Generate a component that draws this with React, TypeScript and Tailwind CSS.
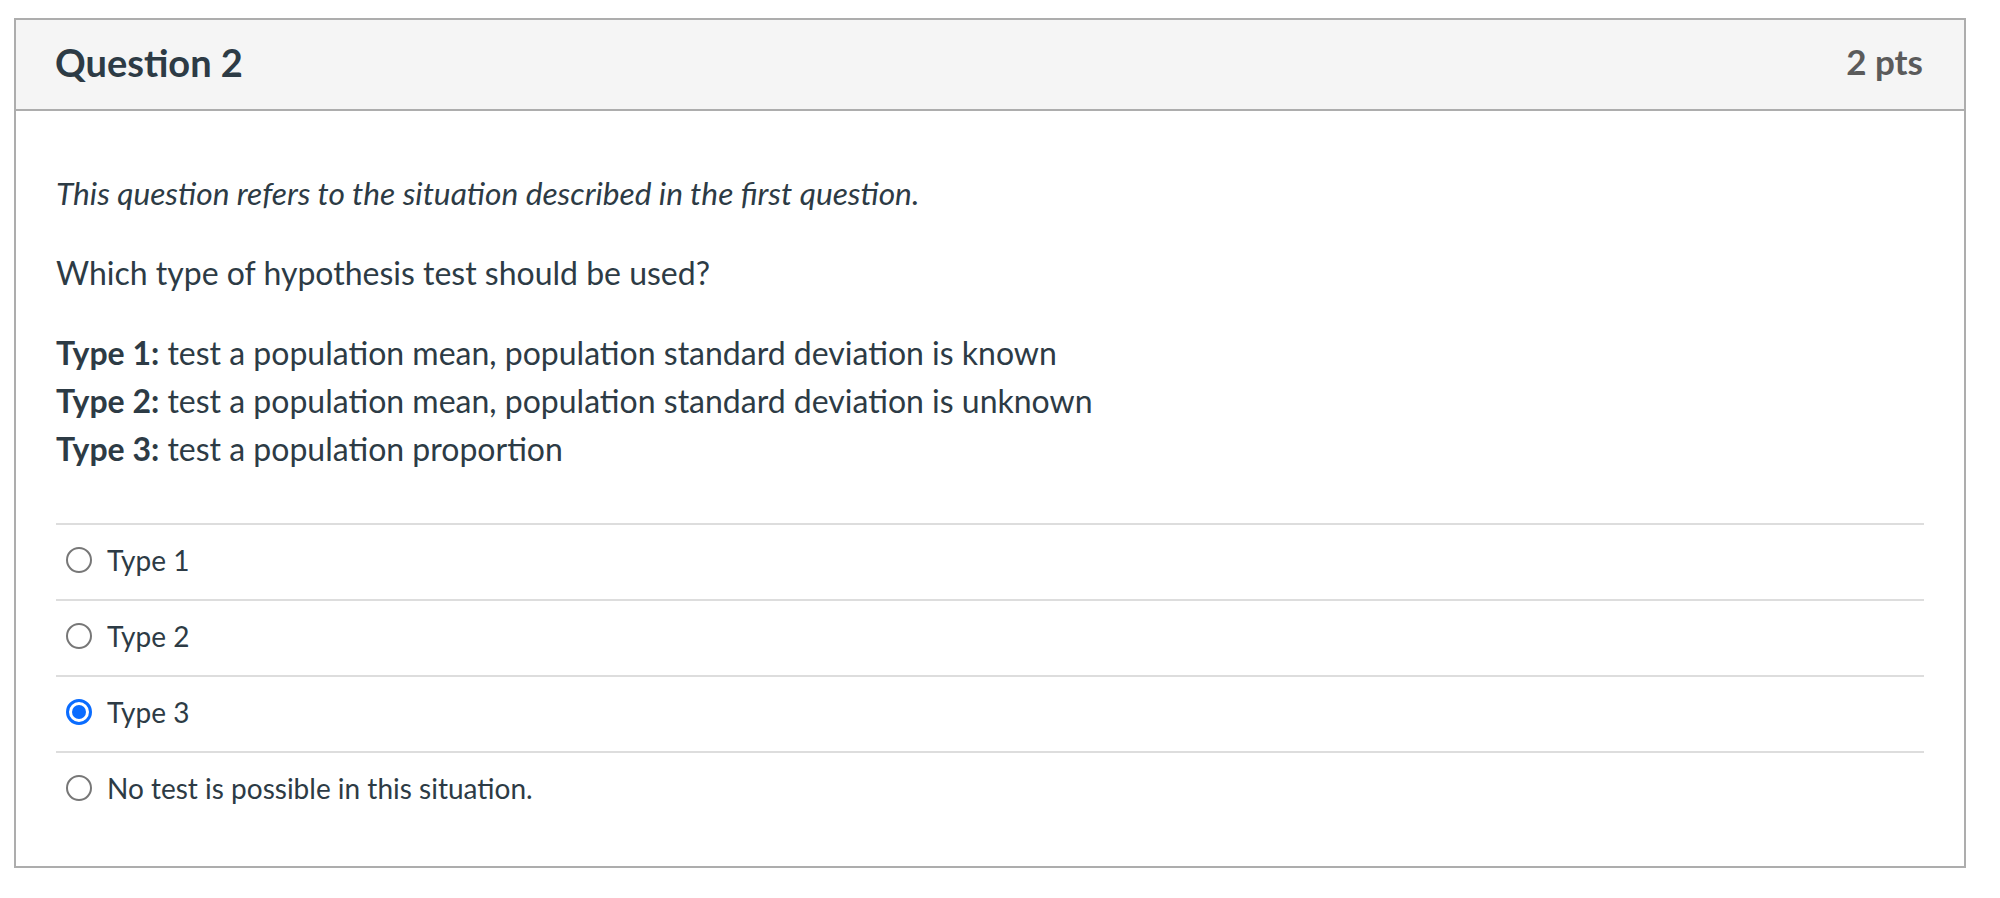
const options = [
  { id: "a", label: "Type 1", checked: false },
  { id: "b", label: "Type 2", checked: false },
  { id: "c", label: "Type 3", checked: true },
  { id: "d", label: "No test is possible in this situation.", checked: false },
];

const types = [
  { name: "Type 1:", text: "test a population mean, population standard deviation is known" },
  { name: "Type 2:", text: "test a population mean, population standard deviation is unknown" },
  { name: "Type 3:", text: "test a population proportion" },
];

function Radio({ checked }: { checked: boolean }) {
  if (checked) {
    return (
      <span className="flex h-[26px] w-[26px] shrink-0 items-center justify-center rounded-full border-[3px] border-[#0a6cff] bg-white">
        <span className="h-[14px] w-[14px] rounded-full bg-[#0a6cff]" />
      </span>
    );
  }
  return (
    <span className="h-[26px] w-[26px] shrink-0 rounded-full border-2 border-[#777777] bg-white" />
  );
}

export default function App() {
  return (
    <div className="min-h-screen bg-white px-[14px] pt-[18px] font-['Lato','Noto_Sans',sans-serif] text-[#2d3b45]">
      <div className="w-[1952px] border-2 border-[#adadad]">
        <div className="flex h-[91px] items-center justify-between border-b-2 border-[#adadad] bg-[#f5f5f5] pl-[39px] pr-[41px] pb-[6px]">
          <h2 className="text-[38px] font-bold leading-none">Question 2</h2>
          <div className="text-[35px] font-bold leading-none text-[#5b5b5b]">2 pts</div>
        </div>

        <div className="px-[40px] pb-[39px] pt-[58px]">
          <div className="text-[32px] leading-[48px]">
            <p className="text-[31.7px] italic">
              This question refers to the situation described in the first question.
            </p>
            <p className="mt-[32px]">Which type of hypothesis test should be used?</p>
            <p className="mt-[32px]">
              {types.map((t) => (
                <span key={t.name} className="block">
                  <strong className="font-bold">{t.name}</strong> {t.text}
                </span>
              ))}
            </p>
          </div>

          <div className="mt-[50px]">
            {options.map((o) => (
              <label
                key={o.id}
                className="flex h-[76px] items-center border-t-2 border-[#dddddd] pb-[4px] pl-[10px]"
              >
                <Radio checked={o.checked} />
                <span className="ml-[15px] text-[28px] leading-none">{o.label}</span>
              </label>
            ))}
          </div>
        </div>
      </div>
    </div>
  );
}
